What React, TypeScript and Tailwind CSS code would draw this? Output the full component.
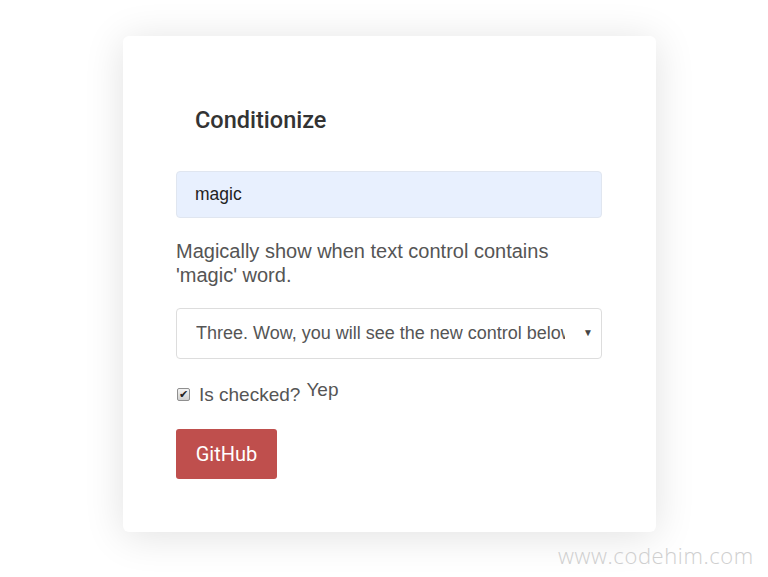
import React from 'react';

const App: React.FC = () => {
  const [text, setText] = React.useState('magic');
  const [checked, setChecked] = React.useState(true);

  return (
    <div className="relative h-[577px] w-[768px] overflow-hidden bg-white font-['Roboto',sans-serif]">
      <div className="pt-[36px] pl-[123px]">
        <div className="w-[533px] h-[496px] rounded-[6px] bg-white shadow-[0_4px_40px_rgba(0,0,0,0.12)] px-[53px] pt-[73px]">
          <h1 className="pl-[19px] text-[23.5px] leading-none font-medium text-[#333]">
            Conditionize
          </h1>
          <input
            value={text}
            onChange={e => setText(e.target.value)}
            className="mt-[38px] block w-[426px] h-[47px] rounded-[4px] border border-[#e0e6f0] bg-[#e8f0fe] px-[18px] text-[17.5px] text-[#222] outline-none font-['Liberation_Sans',sans-serif]"
          />
          <p className="mt-[21px] text-[20px] leading-[24px] text-[#555] font-['Liberation_Sans',sans-serif]">
            Magically show when text control contains
            <br />
            'magic' word.
          </p>
          <div className="relative mt-[21px] flex w-[426px] h-[51px] items-center rounded-[4px] border border-[#ddd] bg-white pl-[19px] pr-[36px]">
            <div className="min-w-0 flex-1 overflow-hidden whitespace-nowrap text-[18px] text-[#555] font-['Liberation_Sans',sans-serif]">
              Three. Wow, you will see the new control below
            </div>
            <span className="absolute right-[8px] top-[16px] text-[10px] text-[#444]">▼</span>
          </div>
          <label className="mt-[22px] flex items-center text-[19px] text-[#555] font-['Liberation_Sans',sans-serif]">
            <input
              type="checkbox"
              checked={checked}
              onChange={e => setChecked(e.target.checked)}
              className="peer sr-only"
            />
            <span className="ml-[1px] mr-[9px] flex h-[13px] w-[13px] items-center justify-center rounded-[2px] border border-[#8f8f8f] bg-gradient-to-b from-[#f4f4f4] to-[#d0d0d0] text-[11px] leading-none text-[#222]">
              {checked ? '✔' : ''}
            </span>
            <span>Is checked?</span>
            <span className="ml-[6px] -translate-y-[5px]">{checked ? 'Yep' : ''}</span>
          </label>
          <button className="mt-[20px] block h-[50px] w-[101px] rounded-[3px] bg-[#bf4f4d] text-[20px] text-white">
            GitHub
          </button>
        </div>
      </div>
      <div className="absolute left-[558px] top-[539px] text-[22px] font-light tracking-[0.6px] text-[#cfcfcf] font-['Open_Sans',sans-serif]">
        www.codehim.com
      </div>
    </div>
  );
};

export default App;
